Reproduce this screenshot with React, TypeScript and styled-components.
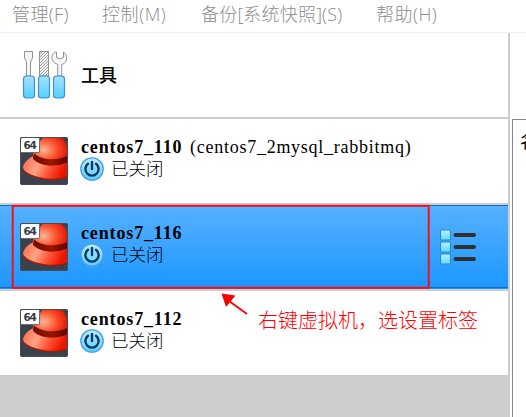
import React from 'react';
import styled, { createGlobalStyle, css } from 'styled-components';

const Global = createGlobalStyle`
  * { box-sizing: border-box; }
  body { margin: 0; background: #fff; overflow: hidden; }
`;

const Window = styled.div`
  display: flex;
  flex-direction: column;
  width: 526px;
  height: 417px;
  position: relative;
  overflow: hidden;
  background: #fff;
  font-family: 'Liberation Serif', 'Noto Sans CJK SC', serif;
`;

const MenuBar = styled.nav`
  display: flex;
  flex: none;
  height: 33px;
  padding-left: 12px;
  border-bottom: 1px solid #f0f0f0;
`;

const MenuItem = styled.span<{ $width: number; $spacing?: number }>`
  width: ${(p) => p.$width}px;
  font: 300 18px/29px 'Open Sans', 'Noto Sans CJK SC', sans-serif;
  letter-spacing: ${(p) => p.$spacing ?? 0}px;
  color: #8c8c8c;
  white-space: nowrap;
`;

const Body = styled.div`
  display: flex;
  flex: 1;
  min-height: 0;
`;

const Sidebar = styled.aside`
  display: flex;
  flex-direction: column;
  gap: 2px;
  width: 510px;
  background: #cdcdcd;
  border-right: 2px solid #cdcdcd;
`;

const Row = styled.div<{ $selected?: boolean }>`
  display: flex;
  align-items: flex-start;
  flex: none;
  height: 84px;
  padding: 18px 0 0 20px;
  background: #fff;
  ${(p) =>
    p.$selected &&
    css`
      background: linear-gradient(#58b1ff, #1b97ff);
      box-shadow: inset 0 1px #0870c8, inset 0 -1px #2196f8, inset 0 -2px #0870c8;
    `}
`;

const ToolRow = styled(Row)`
  padding-top: 0;
  align-items: center;
`;

const Info = styled.div`
  width: 347px;
  margin-left: 12px;
`;

const NameLine = styled.div`
  display: flex;
  height: 20px;
  line-height: 21px;
  white-space: pre;
`;

const VmName = styled.strong`
  width: 106px;
  padding-left: 1px;
  font-size: 18px;
  font-weight: 700;
  letter-spacing: 0.86px;
`;

const Snapshot = styled.span`
  margin-left: 4px;
  font-size: 18px;
  letter-spacing: 0.74px;
`;

const StateLine = styled.div`
  display: flex;
  align-items: center;
  gap: 7px;
  height: 24px;
`;

const StateText = styled.span`
  margin-top: -3px;
  font: 300 17.5px/24px 'Noto Sans CJK SC', sans-serif;
`;

const ToolTitle = styled.strong`
  margin: -3px 0 0 13px;
  font: 500 18px/24px 'Noto Sans CJK SC', sans-serif;
`;

const Details = styled.main`
  flex: 1;
  margin: 86px 0 0 2px;
  padding: 7px 0 0 7px;
  border: solid #828790;
  border-width: 1px 0 0 1px;
  font: 400 18px/26px 'Noto Sans CJK SC', sans-serif;
  overflow: hidden;
  white-space: nowrap;
`;

const Annotation = styled.svg`
  position: absolute;
  inset: 0;
`;

const Note = styled.span`
  position: absolute;
  left: 258px;
  top: 306px;
  font: 300 20px/28px 'Noto Sans CJK SC', sans-serif;
  color: #f00;
  white-space: nowrap;
`;

const Icon = styled.svg`
  display: block;
  flex: none;
`;

const MenuIcon = styled(Icon)`
  margin: 6px 0 0 12px;
`;

function HatIcon({ id }: { id: string }) {
  return (
    <Icon width="48" height="48" viewBox="0 0 48 48">
      <defs>
        <radialGradient id={`crown-${id}`} cx="0.3" cy="0.45" r="0.7">
          <stop offset="0" stopColor="#ffb795" />
          <stop offset="0.5" stopColor="#fb5330" />
          <stop offset="1" stopColor="#dd1200" />
        </radialGradient>
        <linearGradient id={`brim-${id}`} x2="1" y2="0.25">
          <stop offset="0" stopColor="#ff6545" />
          <stop offset="0.4" stopColor="#ffa384" />
          <stop offset="0.7" stopColor="#ff5236" />
          <stop offset="1" stopColor="#e91500" />
        </linearGradient>
        <linearGradient id={`band-${id}`}>
          <stop offset="0" stopColor="#6e0b00" />
          <stop offset="0.5" stopColor="#991600" />
          <stop offset="1" stopColor="#5b0000" />
        </linearGradient>
        <clipPath id={`tile-${id}`}><rect width="48" height="48" rx="2" /></clipPath>
      </defs>
      <g clipPath={`url(#tile-${id})`}>
        <rect width="48" height="48" fill="#3a404c" />
        <path d="M3 32C4 26 9 22 14 20L48 22V40C38 45 22 44 11 39C6 37 3 35 3 32Z" fill="#9f1c0a" />
        <path d="M3 30C4 25 9 21 14 19L48 22V39C38 43 22 42.5 11 37.5C6 35 3 33 3 30Z" fill={`url(#brim-${id})`} />
        <path d="M13 22V17C17 12 19 3 23 1C31-1 41 0 44 3C46 6 47 10 49 14V24C38 31 20 30 13 22Z" fill={`url(#crown-${id})`} />
        <path d="M14 16.5C22 23.5 38 24.5 49 18V24.5C37 31 20 29.5 13 21.5Z" fill={`url(#band-${id})`} />
        <path d="M0 0H20V14Q20 16 18 16H0Z" fill="#6b6c70" />
        <path d="M1 1H19V15H1Z" fill="#fff" />
      </g>
      <rect x="0.5" y="0.5" width="47" height="47" rx="2" fill="none" stroke="#4a4c52" strokeWidth="1" />
      <text x="3.4" y="12.4" textLength="13.4" fontFamily="DejaVu Sans" fontSize="10.5" fontWeight="700" fill="#343b49">64</text>
    </Icon>
  );
}

function PowerIcon({ id }: { id: string }) {
  return (
    <Icon width="24" height="24" viewBox="0 0 24 24">
      <defs>
        <linearGradient id={`power-${id}`} x2="0" y2="1">
          <stop offset="0" stopColor="#b5eeff" />
          <stop offset="1" stopColor="#57cdff" />
        </linearGradient>
      </defs>
      <circle cx="12" cy="12" r="11.2" fill={`url(#power-${id})`} stroke="#4a9ddd" strokeWidth="1.3" />
      <path d="M8 6.8a6.6 6.6 0 1 0 8 0" fill="none" stroke="#123766" strokeWidth="2.4" strokeLinecap="round" />
      <path d="M12 5V12" stroke="#123766" strokeWidth="2.4" strokeLinecap="round" />
    </Icon>
  );
}

function ToolsIcon() {
  return (
    <Icon width="48" height="50" viewBox="0 0 48 50">
      <defs>
        <linearGradient id="handle" x2="0" y2="1">
          <stop offset="0" stopColor="#acdfff" />
          <stop offset="1" stopColor="#4ed3ff" />
        </linearGradient>
        <pattern id="file" width="3" height="3" patternUnits="userSpaceOnUse">
          <rect width="3" height="3" fill="#f4f4f4" />
          <path d="M0 3L3 0" stroke="#888" strokeWidth="0.8" />
        </pattern>
      </defs>
      <g fill="#f5f5f5" stroke="#929292">
        <path d="M4.5 1.5H12.5V8L10.5 12V26H6.5V12L4.5 8Z" />
        <path d="M19.5 1.5H28.5V26H19.5Z" fill="url(#file)" />
        <path d="M35 2Q30.5 5 32.3 10Q33.6 13 37.7 14.5V26H41.7V14.5Q47 13 46.6 7.5Q46.3 3.5 43.5 2V7.3L40 9L36.5 7.5V2Z" />
      </g>
      <g fill="url(#handle)" stroke="#408edc" strokeWidth="1.2">
        <rect x="3.5" y="26" width="11" height="22" rx="3" />
        <rect x="18.5" y="26" width="11" height="22" rx="3" />
        <rect x="33.5" y="26" width="11" height="22" rx="3" />
      </g>
    </Icon>
  );
}

function ListIcon() {
  return (
    <MenuIcon width="38" height="36" viewBox="0 0 38 36">
      <defs>
        <linearGradient id="bullet" x2="0" y2="1">
          <stop offset="0" stopColor="#b6f3ff" />
          <stop offset="1" stopColor="#65d7ff" />
        </linearGradient>
      </defs>
      {[0, 12, 24].map((y) => (
        <g key={y}>
          <rect x="1.5" y={y + 1} width="10" height="10" rx="1.3" fill="url(#bullet)" stroke="#2788d5" strokeWidth="1.1" />
          <path d={`M16.5 ${y + 6}H35`} stroke="#303030" strokeWidth="4" strokeLinecap="round" />
        </g>
      ))}
    </MenuIcon>
  );
}

interface Vm {
  name: string;
  snapshot?: string;
  selected?: boolean;
}

const machines: Vm[] = [
  { name: 'centos7_110', snapshot: '(centos7_2mysql_rabbitmq)' },
  { name: 'centos7_116', selected: true },
  { name: 'centos7_112' },
];

export default function App() {
  return (
    <Window>
      <Global />
      <MenuBar>
        <MenuItem $width={90} $spacing={0.4}>管理(F)</MenuItem>
        <MenuItem $width={99} $spacing={0.6}>控制(M)</MenuItem>
        <MenuItem $width={175} $spacing={0.2}>备份[系统快照](S)</MenuItem>
        <MenuItem $width={80} $spacing={0.5}>帮助(H)</MenuItem>
      </MenuBar>
      <Body>
        <Sidebar>
          <ToolRow>
            <ToolsIcon />
            <ToolTitle>工具</ToolTitle>
          </ToolRow>
          {machines.map((vm) => (
            <Row key={vm.name} $selected={vm.selected}>
              <HatIcon id={vm.name} />
              <Info>
                <NameLine>
                  <VmName>{vm.name}</VmName>
                  {vm.snapshot && <Snapshot>{vm.snapshot}</Snapshot>}
                </NameLine>
                <StateLine>
                  <PowerIcon id={vm.name} />
                  <StateText>已关闭</StateText>
                </StateLine>
              </Info>
              {vm.selected && <ListIcon />}
            </Row>
          ))}
        </Sidebar>
        <Details>名</Details>
      </Body>
      <Annotation width="526" height="417">
        <rect x="12.7" y="205.8" width="416" height="82" fill="none" stroke="#f0101c" strokeWidth="2" />
        <path d="M247 314L229 301" stroke="#f00" strokeWidth="1.8" />
        <path d="M221.5 293.5L235.5 295.5L226 307Z" fill="#f00" />
      </Annotation>
      <Note>右键虚拟机，选设置标签</Note>
    </Window>
  );
}
